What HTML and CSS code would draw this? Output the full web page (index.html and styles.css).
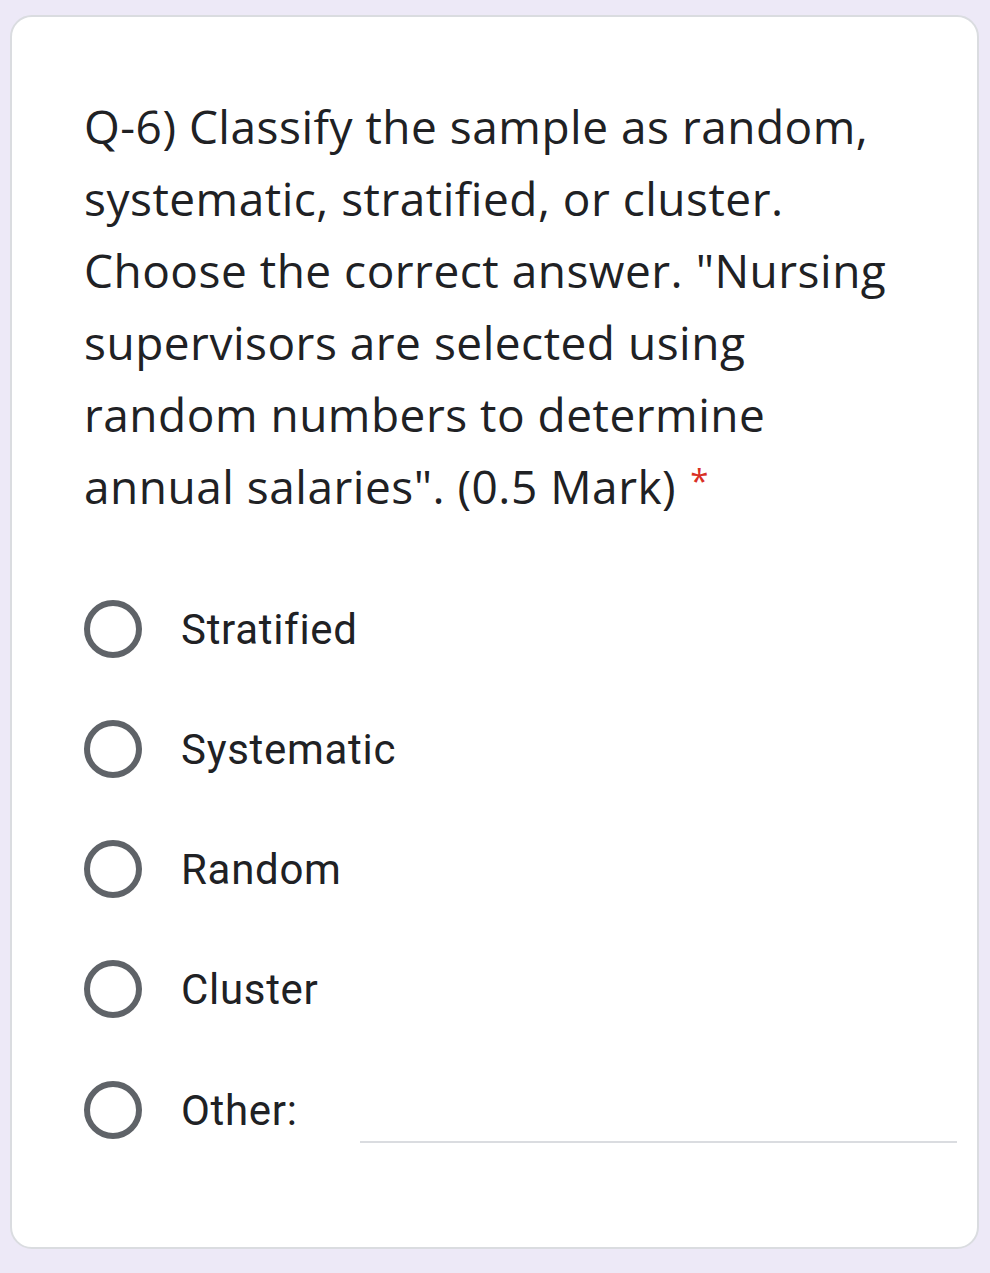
FILE: index.html
```html
<!DOCTYPE html>
<html lang="en">
<head>
    <meta charset="UTF-8">
    <title>Q-6</title>
    <link rel="stylesheet" href="styles.css">
</head>
<body>
    <div class="card">
        <div class="question">
            Q-6) Classify the sample as random, systematic, stratified, or cluster. Choose the correct answer. "Nursing supervisors are selected using random numbers to determine annual salaries". (0.5 Mark)<span class="required">*</span>
        </div>
        <div class="options">
            <label class="option"><span class="radio"></span><span class="option-text">Stratified</span></label>
            <label class="option"><span class="radio"></span><span class="option-text">Systematic</span></label>
            <label class="option"><span class="radio"></span><span class="option-text">Random</span></label>
            <label class="option"><span class="radio"></span><span class="option-text">Cluster</span></label>
            <label class="option other"><span class="radio"></span><span class="option-text">Other:</span><span class="other-line"></span></label>
        </div>
    </div>
</body>
</html>
```
FILE: styles.css
```css
body {
    margin: 0;
    padding: 15px 11px 0 10px;
    background: #ede9f7;
    font-family: "Open Sans", Arial, sans-serif;
    color: #202124;
}

.card {
    height: 1234px;
    box-sizing: border-box;
    background: #fff;
    border: 2px solid #dadce0;
    border-radius: 22px;
    padding: 73px 20px 0 72px;
}

.question {
    font-size: 46px;
    line-height: 72px;
    padding-right: 62px;
    letter-spacing: 0.5px;
}

.required {
    display: inline-block;
    color: #d93025;
    font-size: 33px;
    line-height: 33px;
    margin-left: 14px;
    vertical-align: 11px;
}

.options {
    margin-top: 47px;
}

.option {
    display: flex;
    align-items: center;
    height: 120px;
}

.radio {
    width: 58px;
    height: 58px;
    box-sizing: border-box;
    border: 6px solid #5f6368;
    border-radius: 50%;
    flex-shrink: 0;
}

.option-text {
    font-family: Roboto, Arial, sans-serif;
    font-size: 42px;
    letter-spacing: 0.7px;
    margin-left: 39px;
}

.other {
    height: 122px;
}

.other-line {
    flex: 1;
    align-self: flex-end;
    margin: 0 0 28px 62px;
    height: 2px;
    background: #dadce0;
}
```
